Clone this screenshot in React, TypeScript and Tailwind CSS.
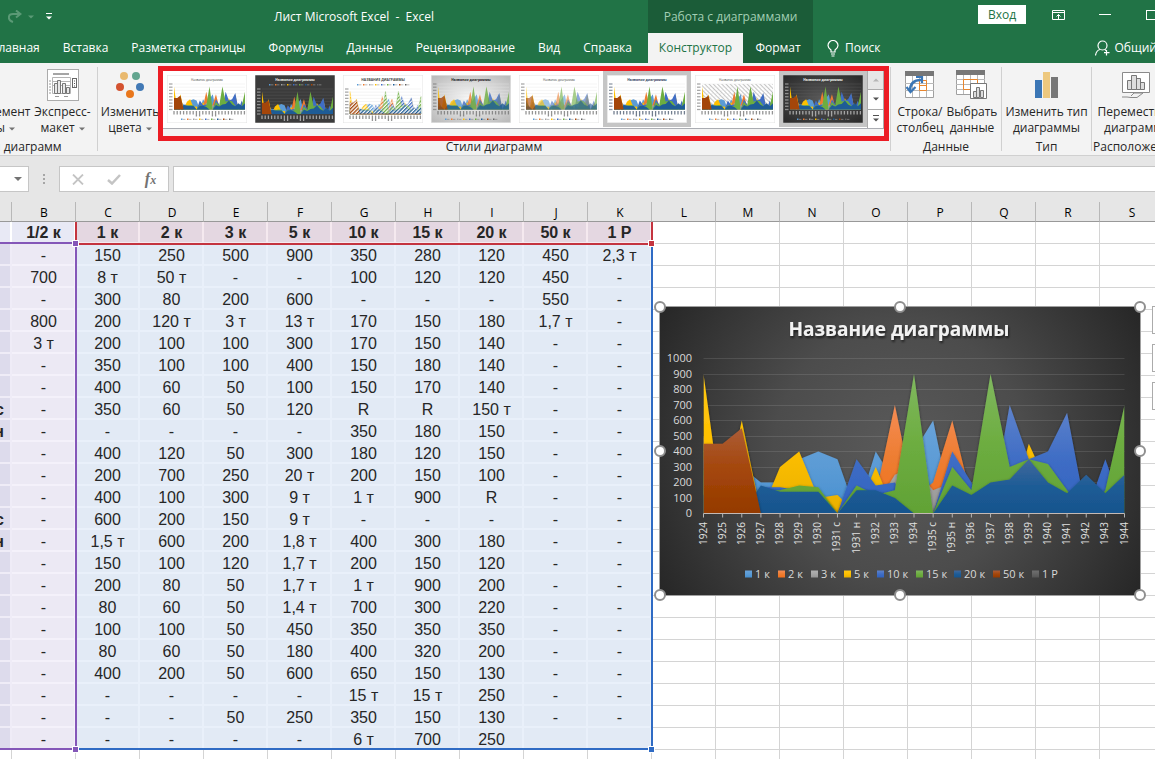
import type { ReactNode } from 'react';

type Variant = 'light' | 'dark' | 'hatched' | 'gradient' | 'soft' | 'navy' | 'lines' | 'night';

const COLUMNS = 'ABCDEFGHIJKLMNOPQRS'.split('');
const HEADERS = ['1/2 к', '1 к', '2 к', '3 к', '5 к', '10 к', '15 к', '20 к', '50 к', '1 Р'];

// One row per year: B..K
const ROWS = [
  ['-', '150', '250', '500', '900', '350', '280', '120', '450', '2,3 т'],
  ['700', '8 т', '50 т', '-', '-', '100', '120', '120', '450', '-'],
  ['-', '300', '80', '200', '600', '-', '-', '-', '550', '-'],
  ['800', '200', '120 т', '3 т', '13 т', '170', '150', '180', '1,7 т', '-'],
  ['3 т', '200', '100', '100', '300', '170', '150', '140', '-', '-'],
  ['-', '350', '100', '100', '400', '150', '180', '140', '-', '-'],
  ['-', '400', '60', '50', '100', '150', '170', '140', '-', '-'],
  ['-', '350', '60', '50', '120', 'R', 'R', '150 т', '-', '-'],
  ['-', '-', '-', '-', '-', '350', '180', '150', '-', '-'],
  ['-', '400', '120', '50', '300', '180', '120', '150', '-', '-'],
  ['-', '200', '700', '250', '20 т', '200', '150', '100', '-', '-'],
  ['-', '400', '100', '300', '9 т', '1 т', '900', 'R', '-', '-'],
  ['-', '600', '200', '150', '9 т', '-', '-', '-', '-', '-'],
  ['-', '1,5 т', '600', '200', '1,8 т', '400', '300', '180', '-', '-'],
  ['-', '150', '100', '120', '1,7 т', '200', '150', '120', '-', '-'],
  ['-', '200', '80', '50', '1,7 т', '1 т', '900', '200', '-', '-'],
  ['-', '80', '60', '50', '1,4 т', '700', '300', '220', '-', '-'],
  ['-', '100', '100', '50', '450', '350', '350', '350', '-', '-'],
  ['-', '80', '60', '50', '180', '400', '320', '200', '-', '-'],
  ['-', '400', '200', '50', '600', '650', '150', '130', '-', '-'],
  ['-', '-', '-', '-', '-', '15 т', '15 т', '250', '-', '-'],
  ['-', '-', '-', '50', '250', '350', '150', '130', '-', '-'],
  ['-', '-', '-', '-', '-', '6 т', '700', '250', '', ''],
];

const YEARS = [
  '1924', '1925', '1926', '1927', '1928', '1929', '1930', '1931 с', '1931 н', '1932', '1933', '1934',
  '1935 с', '1935 н', '1936', '1937', '1938', '1939', '1940', '1941', '1942', '1943', '1944',
];

const SERIES = [
  { name: '1 к', top: '#69a3da', bottom: '#468fd0', flat: '#5b9bd5', x: 85 },
  { name: '2 к', top: '#f58c55', bottom: '#f26f1c', flat: '#ed7d31', x: 118 },
  { name: '3 к', top: '#b0b0b0', bottom: '#959595', flat: '#a5a5a5', x: 151 },
  { name: '5 к', top: '#ffc816', bottom: '#e8b000', flat: '#ffc000', x: 184 },
  { name: '10 к', top: '#5f83cb', bottom: '#2f62c0', flat: '#3f6dc5', x: 217 },
  { name: '15 к', top: '#80b860', bottom: '#61a235', flat: '#6dad40', x: 256 },
  { name: '20 к', top: '#41689c', bottom: '#16548d', flat: '#1e5c96', x: 294 },
  { name: '50 к', top: '#ac5c37', bottom: '#943a00', flat: '#a4460a', x: 333 },
  { name: '1 Р', top: '#707070', bottom: '#555555', flat: '#636363', x: 372 },
];

// Text cells count as zero, as they do in the sheet
const seriesValues = SERIES.map((_, i) => ROWS.map((row) => Number(row[i + 1]) || 0));

function areaPath(values: number[], left: number, right: number, top: number, base: number) {
  const step = (right - left) / (values.length - 1);
  const points = values.map((v, i) => `${left + i * step},${base - (v / 1000) * (base - top)}`);
  return `M${left},${base}L${points.join('L')}L${right},${base}Z`;
}

function AreaChart() {
  const left = 43.5;
  const right = 464.5;
  const top = 51.5;
  const base = 206.5;
  const step = (right - left) / 22;

  return (
    <svg viewBox="0 0 480 288" className="block w-full font-['Open_Sans',sans-serif]" role="img" aria-label="Название диаграммы">
      <defs>
        <radialGradient id="chart-bg" gradientUnits="userSpaceOnUse" cx="240" cy="144" r="280">
          <stop offset="0" stopColor="#5a5a5a" />
          <stop offset="0.45" stopColor="#4c4c4c" />
          <stop offset="1" stopColor="#262626" />
        </radialGradient>
        {SERIES.map((s, i) => (
          <linearGradient key={s.name} id={`series-${i}`} x1="0" y1="0" x2="0" y2="1">
            <stop offset="0" stopColor={s.top} />
            <stop offset="0.5" stopColor={s.flat} />
            <stop offset="1" stopColor={s.bottom} />
          </linearGradient>
        ))}
        <filter id="series-shadow" x="-5%" y="-10%" width="110%" height="120%">
          <feDropShadow dx="0" dy="1" stdDeviation="1.5" floodColor="#000" floodOpacity="0.45" />
        </filter>
        <filter id="title-shadow" x="-5%" y="-20%" width="110%" height="160%">
          <feDropShadow dx="1" dy="2" stdDeviation="1" floodColor="#000" floodOpacity="0.6" />
        </filter>
        <clipPath id="plot-clip">
          <rect x={left} y="40" width={right - left} height={base - 40} />
        </clipPath>
      </defs>
      <rect width="480" height="288" fill="url(#chart-bg)" />
      <text x="239" y="29" textAnchor="middle" fontSize="19" fontWeight="700" fill="#f2f2f2" filter="url(#title-shadow)">
        Название диаграммы
      </text>
      {Array.from({ length: 11 }, (_, i) => {
        const y = base - i * 15.5;
        return (
          <g key={i}>
            {i > 0 && <line x1={left} x2={right} y1={Math.floor(y) + 0.5} y2={Math.floor(y) + 0.5} stroke="#f2f2f2" strokeOpacity="0.12" />}
            <text x="32" y={y + 3.5} textAnchor="end" fontSize="11" fill="#d9d9d9">
              {i * 100}
            </text>
          </g>
        );
      })}
      <g clipPath="url(#plot-clip)">
        {seriesValues.map((values, i) => (
          <path key={i} d={areaPath(values, left, right, top, base)} fill={`url(#series-${i})`} filter={values.some(Boolean) ? 'url(#series-shadow)' : undefined} />
        ))}
      </g>
      <line x1={left} x2={right} y1={base} y2={base} stroke="#c4b9b4" />
      {YEARS.map((year, i) => {
        const x = left + i * step;
        return (
          <g key={year}>
            <line x1={x} x2={x} y1={base} y2={base + 4} stroke="#b4b4b4" />
            <text transform={`translate(${x + 3} 215) rotate(-90)`} textAnchor="end" fontSize="10" fill="#e0e0e0">
              {year}
            </text>
          </g>
        );
      })}
      {SERIES.map((s, i) => (
        <g key={s.name}>
          <rect x={s.x} y="263.5" width="7" height="7" fill={`url(#series-${i})`} />
          <text x={s.x + 10} y="271" fontSize="11" fill="#d9d9d9">
            {s.name}
          </text>
        </g>
      ))}
    </svg>
  );
}

function StyleThumb({ variant, id }: { variant: Variant; id: string }) {
  const dark = variant === 'dark' || variant === 'night';
  const legendOnTop = variant === 'dark' || variant === 'hatched';
  const bold = dark || variant === 'gradient' || variant === 'navy' || variant === 'hatched';
  const top = legendOnTop ? 14 : 9;
  const base = legendOnTop ? 39 : 34.5;
  const ink = dark ? '#c8c8c8' : variant === 'navy' ? '#44546a' : '#707070';
  const bg = variant === 'dark' ? '#3b3b3b' : dark || variant === 'gradient' ? `url(#${id}-bg)` : '#fff';

  return (
    <svg viewBox="0 0 80 48" className="block h-12 w-20 font-['Open_Sans',sans-serif]">
      <defs>
        <radialGradient id={`${id}-bg`} r="65%">
          <stop offset="0" stopColor={dark ? '#5a5a5a' : '#fafafa'} />
          <stop offset="1" stopColor={dark ? '#2c2c2c' : '#bcbcbc'} />
        </radialGradient>
        <pattern id={`${id}-back`} width="3" height="3" patternUnits="userSpaceOnUse" patternTransform="rotate(-45)">
          <rect width="0.6" height="3" fill="#999" />
        </pattern>
        {SERIES.map((s, i) => (
          <pattern key={s.name} id={`${id}-h${i}`} width="2.600" height="2.600" patternUnits="userSpaceOnUse" patternTransform="rotate(45)">
            <rect width="2.600" height="2.600" fill="#fff" />
            <rect width="1.300" height="2.600" fill={s.flat} />
          </pattern>
        ))}
      </defs>
      <rect x="0.250" y="0.250" width="79.500" height="47.500" fill={bg} stroke={dark ? 'none' : '#e2e2e2'} strokeWidth="0.500" />
      <text x="40" y="5.500" textAnchor="middle" fontSize={bold ? 3.4 : 3} fontWeight={bold ? 700 : 400} fill={dark ? '#f2f2f2' : variant === 'gradient' ? '#222' : variant === 'navy' ? '#34455e' : '#444'}>
        {variant === 'hatched' ? 'НАЗВАНИЕ ДИАГРАММЫ' : 'Название диаграммы'}
      </text>
      {variant === 'lines' && <rect x="7" y={top} width="71" height={base - top} fill={`url(#${id}-back)`} />}
      {Array.from({ length: 9 }, (_, i) => {
        const y = base - (i * (base - top)) / 8;
        return (
          <g key={i}>
            <line x1="7" x2="78" y1={y} y2={y} stroke={dark ? '#5c5c5c' : '#e4e4e4'} strokeWidth="0.4" />
            <line x1="2" x2="5.5" y1={y} y2={y} stroke={ink} strokeWidth="1.300" opacity="0.6" />
          </g>
        );
      })}
      {seriesValues.map((values, i) => (
        <path
          key={i}
          d={areaPath(values, 7, 78, top, base)}
          fill={variant === 'hatched' ? `url(#${id}-h${i})` : SERIES[i].flat}
          stroke={variant === 'hatched' && i < 8 ? SERIES[i].flat : 'none'}
          strokeWidth="0.3"
          opacity={variant === 'soft' ? 0.6 : variant === 'gradient' ? 0.8 : 1}
        />
      ))}
      {YEARS.map((year, i) => (
        <line key={year} x1={7 + i * 3.2} x2={7 + i * 3.2} y1={base + 1.5} y2={base + (year.length > 4 ? 7 : 5)} stroke={ink} strokeWidth="1.300" opacity="0.75" />
      ))}
      {SERIES.map((s, i) => (
        <g key={s.name}>
          <rect x={14 + i * 6} y={legendOnTop ? 9 : 43.5} width="1.500" height="1.500" fill={s.flat} />
          <rect x={16 + i * 6} y={legendOnTop ? 9.4 : 43.9} width="2.400" height="0.900" fill={ink} opacity="0.5" />
        </g>
      ))}
    </svg>
  );
}

const STYLES: { label: string; variant: Variant; framed?: boolean }[] = [
  { label: 'Стиль 1', variant: 'light' },
  { label: 'Стиль 2', variant: 'dark' },
  { label: 'Стиль 3', variant: 'hatched' },
  { label: 'Стиль 4', variant: 'gradient' },
  { label: 'Стиль 5', variant: 'soft' },
  { label: 'Стиль 6', variant: 'navy', framed: true },
  { label: 'Стиль 7', variant: 'lines' },
  { label: 'Стиль 8', variant: 'night', framed: true },
];

function Caret({ className = '' }: { className?: string }) {
  return (
    <svg viewBox="0 0 6 4" className={`inline-block h-1 w-1.5 ${className}`} aria-hidden="true">
      <path d="M0 0.5h6L3 3.5z" fill="currentColor" />
    </svg>
  );
}

function RibbonButton({ lines, icon, caret, className }: { lines: [string, string]; icon?: ReactNode; caret?: boolean; className: string }) {
  return (
    <button type="button" className={`flex shrink-0 flex-col items-center whitespace-nowrap pt-1 leading-4 ${className}`}>
      <span className="mb-px flex h-9 items-center justify-center">{icon}</span>
      <span>{lines[0]}</span>
      <span>
        {lines[1]}
        {caret && <Caret className="ml-1 align-middle text-neutral-500" />}
      </span>
    </button>
  );
}

function RibbonGroup({ title, className, children }: { title: string; className: string; children: ReactNode }) {
  return (
    <section className={`flex shrink-0 flex-col ${className}`}>
      <div className="flex h-[76px] justify-center">{children}</div>
      <div className="whitespace-nowrap text-center leading-4">{title}</div>
    </section>
  );
}

function Divider() {
  return <div className="mt-1 h-[84px] w-px shrink-0 bg-[#d0d0d0]" />;
}

function LayoutIcon() {
  return (
    <svg width="32" height="32" viewBox="0 0 32 32" fill="none">
      <rect x="0.5" y="0.5" width="31" height="31" fill="#fff" stroke="#ababab" />
      <path d="M6 5h16" stroke="#a5a5a5" strokeWidth="2" />
      <path d="M5.5 8.500h18v16h-18zM5.500 12.500h18M5.500 16.500h18" stroke="#b5b5b5" />
      <path d="M2 12h2M2 15h2M2 18h2M2 21h2M2 24h2M8 27.500h4M17 27.500h4" stroke="#999" />
      <path d="M7.500 14.500h3v10h-3zM10.500 11.500h3v13h-3zM15.500 14.500h3v10h-3zM19.500 18.500h3v6h-3z" fill="#e8e8e8" stroke="#777" />
      <rect x="25.500" y="9.500" width="4" height="9" fill="#fff" stroke="#666" />
      <path d="M27 12h1M27 14.500h1M27 17h1" stroke="#555" />
    </svg>
  );
}

function ColorsIcon() {
  return (
    <svg width="28" height="28" viewBox="0 0 28 28">
      <circle cx="8" cy="5" r="4" fill="#e9b96e" />
      <circle cx="20" cy="5" r="4" fill="#63a58f" />
      <circle cx="4" cy="16" r="4" fill="#d35230" />
      <circle cx="24" cy="16" r="4" fill="#4179b5" />
      <circle cx="14" cy="23" r="4" fill="#e9771c" />
    </svg>
  );
}

function SwitchIcon() {
  return (
    <svg width="30" height="28" viewBox="0 0 30 28" fill="none">
      <path d="M0.500 1.500h28v25h-28z" fill="#fff" stroke="#a0a0a0" />
      <path d="M0 0h29v5H0z" fill="#777" />
      <path d="M7.500 5v21M14.500 5v21M21.500 5v21M0 12.500h29M0 19.500h29" stroke="#b8b8b8" />
      <path d="M14.500 9.500h7v10h-7zM14.500 14.500h7" stroke="#e8862e" />
      <path d="M5 20C5 12 9 9 16 9" stroke="#3b76b5" strokeWidth="2.500" />
      <path d="M11 6h6v6M1.500 16l4 5 5-5" stroke="#3b76b5" strokeWidth="2.200" />
    </svg>
  );
}

function SelectDataIcon() {
  return (
    <svg width="32" height="30" viewBox="0 0 32 30" fill="none">
      <path d="M0.500 1.500h28v23h-28z" fill="#fff" stroke="#a0a0a0" />
      <path d="M0 0h29v5H0z" fill="#777" />
      <path d="M7.500 5v19M14.500 5v19M21.500 5v19M0 9.500h29M0 14.500h29M0 19.500h29" stroke="#b8b8b8" />
      <path d="M7.500 9.500h14v10h-14z" stroke="#e8862e" />
      <path d="M14.500 13.500h16v15h-16z" fill="#fff" stroke="#777" />
      <path d="M17.500 21.500h3v6h-3zM20.500 17.500h3v10h-3zM24.500 20.500h3v7h-3z" fill="#ddd" stroke="#777" />
    </svg>
  );
}

function ChartTypeIcon() {
  return (
    <svg width="24" height="26" viewBox="0 0 24 26">
      <path d="M0 8h7v18H0z" fill="#3b76b5" />
      <path d="M8 0h7v26H8z" fill="#edc87e" />
      <path d="M16 5h7v21h-7z" fill="#777" />
    </svg>
  );
}

function MoveChartIcon() {
  return (
    <svg width="28" height="26" viewBox="0 0 28 26" fill="none">
      <path d="M0.500 0.500h27v20h-27z" fill="#fff" stroke="#8a8a8a" />
      <path d="M5.500 8.500h4v9h-4zM9.500 3.500h5v14h-5zM14.500 6.500h4v11h-4zM18.500 10.500h4v7h-4z" fill="#ddd" stroke="#777" />
      <path d="M0 25h5l4 0.500h6l6-4.500h-9l-3 3" fill="#f3f3f3" stroke="#8a8a8a" />
    </svg>
  );
}

function Tab({ children }: { children: ReactNode }) {
  return (
    <button type="button" className="shrink-0 whitespace-nowrap">
      {children}
    </button>
  );
}

function TitleAndTabs() {
  return (
    <header className="flex h-[63px] shrink-0 overflow-hidden bg-[#217346] text-white">
      <div className="flex w-[648px] shrink-0 flex-col">
        <div className="flex h-[33px] items-center">
          <button type="button" aria-label="Вернуть" className="ml-2 flex items-center gap-1.5 text-[#5b9a76]">
            <svg width="14" height="13" viewBox="0 0 14 13" fill="none" stroke="currentColor" strokeWidth="2">
              <path d="M5 12C-1 10 0 4 5 4h7M8 0.500L12.500 4 8 7.500" />
            </svg>
            <Caret />
          </button>
          <button type="button" aria-label="Настройка панели быстрого доступа" className="ml-3 flex flex-col items-center gap-0.5">
            <span className="h-px w-1.5 bg-white" />
            <Caret />
          </button>
          <div className="flex-1 pl-2 text-center">Лист Microsoft Excel&nbsp; -&nbsp; Excel</div>
        </div>
        <nav className="flex h-[30px] items-center justify-end gap-[23px] pr-4">
          <Tab>Главная</Tab>
          <Tab>Вставка</Tab>
          <Tab>Разметка страницы</Tab>
          <Tab>Формулы</Tab>
          <Tab>Данные</Tab>
          <Tab>Рецензирование</Tab>
          <Tab>Вид</Tab>
          <Tab>Справка</Tab>
        </nav>
      </div>
      <div className="flex w-[165px] shrink-0 flex-col bg-[#1b5c38]">
        <div className="flex h-[33px] items-center justify-center text-[#a3cfb5]">Работа с диаграммами</div>
        <div className="flex h-[30px]">
          <button type="button" className="w-[95px] bg-[#f3f3f3] text-[#217346]">Конструктор</button>
          <button type="button" className="flex-1">Формат</button>
        </div>
      </div>
      <div className="flex min-w-0 flex-1 flex-col">
        <div className="-mr-2 flex h-[33px] items-center justify-end">
          <button type="button" className="mb-1 h-[19px] w-12 bg-white text-[#217346]">Вход</button>
          <button type="button" aria-label="Параметры ленты" className="mx-[26px] mb-1">
            <svg width="13" height="10" viewBox="0 0 13 10" fill="none" stroke="currentColor">
              <path d="M0.500 0.500h12v9h-12zM0 2.500h13M6.500 9V4.500M4.500 6.500l2-2 2 2" />
            </svg>
          </button>
          <button type="button" aria-label="Свернуть" className="mb-1 ml-2 h-px w-3 bg-white" />
          <button type="button" aria-label="Развернуть" className="mb-1 ml-[35px] h-2.5 w-[17px] border border-white" />
        </div>
        <div className="flex h-[30px] items-center">
          <button type="button" className="ml-3.5 flex items-center gap-1.5">
            <svg width="12" height="17" viewBox="0 0 12 17" fill="none" stroke="currentColor" strokeWidth="1.200">
              <path d="M4 12V10C2 8.500 1 7.500 1 5.500a5 5 0 0 1 10 0C11 7.500 10 8.500 8 10v2zM4 14h4M4.500 16h3" />
            </svg>
            Поиск
          </button>
          <button type="button" className="-mr-11 ml-auto flex items-center gap-1 whitespace-nowrap">
            <svg width="15" height="16" viewBox="0 0 15 16" fill="none" stroke="currentColor" strokeWidth="1.200">
              <circle cx="7.500" cy="5.500" r="4.500" />
              <path d="M0.500 15.500C1 12 2.500 10 5 9.500M10 9.500l1 1M11.500 10v5.500M9 12.700h5.500" />
            </svg>
            Общий доступ
          </button>
        </div>
      </div>
    </header>
  );
}

function Ribbon() {
  return (
    <div className="flex h-[93px] shrink-0 overflow-hidden border-b border-[#d0d0d0] bg-[#f3f3f3] text-[#262626]">
      <RibbonGroup title="Макеты диаграмм" className="-ml-20 w-[177px]">
        <RibbonButton lines={['Добавить элемент', 'диаграммы']} caret className="w-27" />
        <RibbonButton lines={['Экспресс-', 'макет']} caret icon={<LayoutIcon />} className="w-16" />
      </RibbonGroup>
      <Divider />
      <RibbonGroup title="Стили диаграмм" className="w-[792px]">
        <RibbonButton lines={['Изменить', 'цвета']} caret icon={<ColorsIcon />} className="w-15 pl-1" />
        <div className="mr-px mt-[3px] flex h-[75px] flex-1 items-start border-5 border-[#ec1c24]">
          <div className="flex h-[58px] flex-1 border-b border-[#abadb3] bg-white">
            {STYLES.map((style, i) => (
              <button
                key={style.label}
                type="button"
                aria-label={style.label}
                className={`flex h-14 w-22 shrink-0 items-center justify-center ${style.framed ? 'bg-[#c5c5c5]' : ''}`}
              >
                <StyleThumb variant={style.variant} id={`style-${i}`} />
              </button>
            ))}
            <div className="flex flex-1 flex-col border-x border-[#ababab] text-neutral-600">
              <button type="button" aria-label="Вверх" className="flex flex-1 items-center justify-center bg-[#e6e6e6] text-[#b5b5b5]">
                <Caret className="rotate-180" />
              </button>
              <button type="button" aria-label="Вниз" className="flex flex-1 items-center justify-center border-y border-[#ababab]">
                <Caret />
              </button>
              <button type="button" aria-label="Все стили" className="flex flex-1 flex-col items-center justify-center gap-0.5">
                <span className="h-px w-1.5 bg-neutral-600" />
                <Caret />
              </button>
            </div>
          </div>
        </div>
      </RibbonGroup>
      <Divider />
      <RibbonGroup title="Данные" className="w-[110px]">
        <RibbonButton lines={['Строка/', 'столбец']} icon={<SwitchIcon />} className="w-13" />
        <RibbonButton lines={['Выбрать', 'данные']} icon={<SelectDataIcon />} className="w-13" />
      </RibbonGroup>
      <Divider />
      <RibbonGroup title="Тип" className="w-[89px]">
        <RibbonButton lines={['Изменить тип', 'диаграммы']} icon={<ChartTypeIcon />} className="w-20" />
      </RibbonGroup>
      <Divider />
      <RibbonGroup title="Расположение" className="w-[88px]">
        <RibbonButton lines={['Переместить', 'диаграмму']} icon={<MoveChartIcon />} className="w-20" />
      </RibbonGroup>
    </div>
  );
}

function FormulaBar() {
  return (
    <div className="flex h-[46px] shrink-0 items-center bg-[#e6e6e6]">
      <div className="flex h-[26px] w-[29px] shrink-0 items-center justify-end border border-l-0 border-[#c6c6c6] bg-white">
        <input aria-label="Имя" className="w-3 min-w-0 outline-none" />
        <button type="button" aria-label="Список имён" className="flex px-1.5 text-neutral-500">
          <Caret className="h-1.5 w-2" />
        </button>
      </div>
      <div className="mx-3.5 flex flex-col gap-0.5">
        <span className="size-0.5 bg-[#a6a6a6]" />
        <span className="size-0.5 bg-[#a6a6a6]" />
        <span className="size-0.5 bg-[#a6a6a6]" />
      </div>
      <div className="flex h-[26px] w-[110px] shrink-0 items-center justify-around border border-[#c6c6c6] bg-white text-[#c4c4c4]">
        <button type="button" aria-label="Отмена">
          <svg width="12" height="11" viewBox="0 0 12 11" fill="none" stroke="currentColor" strokeWidth="1.800">
            <path d="M1 0.500l10 10M11 0.500l-10 10" />
          </svg>
        </button>
        <button type="button" aria-label="Ввод">
          <svg width="14" height="11" viewBox="0 0 14 11" fill="none" stroke="currentColor" strokeWidth="2.500">
            <path d="M1 6l4 3.500L13 1" />
          </svg>
        </button>
        <button type="button" className="font-['Liberation_Serif',serif] text-base font-bold italic leading-4 text-neutral-500">
          f<span className="text-xs">x</span>
        </button>
      </div>
      <input aria-label="Строка формул" className="ml-1 h-[26px] min-w-0 flex-1 border border-r-0 border-[#c6c6c6] bg-white px-2 outline-none" />
    </div>
  );
}

function cellClass(col: number) {
  if (col === 0) return 'border-r-2 border-b-2 border-[#efecf7] bg-[#dddbec]';
  if (col === 1) return 'border-r-2 border-b-2 border-[#f4f1fa] bg-[#ece9f4]';
  if (col <= 10) return 'border-r-2 border-b-2 border-[#e9f0fa] bg-[#e2eaf5]';
  return 'border-r border-b border-[#d4d4d4] bg-white';
}

function headClass(col: number) {
  if (col <= 1) return 'border-r-2 border-b-2 border-white bg-[#e8e9f5]';
  if (col <= 10) return 'border-r-2 border-b-2 border-[#f5e9ef] bg-[#e4d7e1]';
  return 'border-r border-b border-[#d4d4d4] bg-white';
}

function Handle({ className }: { className: string }) {
  return <span className={`absolute size-[7px] border border-white ${className}`} />;
}

function Knob({ className }: { className: string }) {
  return <span className={`absolute size-3 -translate-x-1/2 -translate-y-1/2 rounded-full border-2 border-[#8f8f8f] bg-white ${className}`} />;
}

function Sheet() {
  return (
    <main className="relative min-h-0 flex-1 overflow-hidden bg-white">
      <table className="w-[1164px] table-fixed border-separate border-spacing-0 text-center font-['Liberation_Sans',Arial,sans-serif] text-base text-[#262626]">
        <colgroup>
          {COLUMNS.map((c, i) => (
            <col key={c} className={i === 0 ? 'w-3' : 'w-16'} />
          ))}
        </colgroup>
        <thead>
          <tr className="h-5 bg-[#e6e6e6] font-['Open_Sans',sans-serif] text-xs text-black">
            {COLUMNS.map((c, i) => (
              <th key={c} scope="col" className="h-5 border-r border-b border-r-[#b8b8b8] border-b-[#999] p-0 pt-0.5 pl-px font-normal leading-4">
                {i > 0 && c}
              </th>
            ))}
          </tr>
        </thead>
        <tbody>
          <tr className="h-[22px]">
            {COLUMNS.map((c, i) => (
              <td key={c} className={`h-[22px] p-0 pt-0.5 pl-px font-bold leading-[18px] ${headClass(i)}`}>
                {HEADERS[i - 1]}
              </td>
            ))}
          </tr>
          {ROWS.map((row, r) => (
            <tr key={YEARS[r]} className="h-[22px]">
              {COLUMNS.map((c, i) => (
                <td key={c} className={`h-[22px] p-0 pt-1 pl-px leading-4 ${cellClass(i)}`}>
                  {i === 0 ? (
                    <span className="flex justify-end pr-1.5 font-bold">{YEARS[r].split(' ')[1]}</span>
                  ) : (
                    row[i - 1]
                  )}
                </td>
              ))}
            </tr>
          ))}
          <tr className="h-[22px]">
            {COLUMNS.map((c) => (
              <td key={c} className="h-[22px] border-r border-b border-[#d4d4d4] p-0" />
            ))}
          </tr>
        </tbody>
      </table>

      {/* coloured outlines of the chart's source ranges */}
      <div className="absolute left-0 top-5 h-[22px] w-[76px] border-b-2 border-[#8457b8]" />
      <div className="absolute left-0 top-[42px] h-[506px] w-[77px] border-r-2 border-b-2 border-[#8457b8]" />
      <div className="absolute left-[77px] top-[42px] h-[506px] w-[576px] border-r-2 border-b-2 border-[#2f6bc4]" />
      <div className="absolute left-[75px] top-5 h-[23px] w-[578px] border-x-2 border-b-2 border-[#c4343f]" />
      <Handle className="left-[72px] top-[38px] bg-[#8457b8]" />
      <Handle className="left-[648px] top-[38px] bg-[#c4343f]" />
      <Handle className="left-[72px] top-[544px] bg-[#8457b8]" />
      <Handle className="left-[648px] top-[544px] bg-[#2f6bc4]" />

      <figure className="absolute left-[660px] top-[105px] w-[480px] outline outline-[#a0a0a0]">
        <AreaChart />
        <Knob className="left-0 top-0" />
        <Knob className="left-1/2 top-0" />
        <Knob className="left-full top-0" />
        <Knob className="left-0 top-1/2" />
        <Knob className="left-full top-1/2" />
        <Knob className="left-0 top-full" />
        <Knob className="left-1/2 top-full" />
        <Knob className="left-full top-full" />
      </figure>
      <div className="absolute left-[1152px] top-[104px] flex flex-col gap-2.5">
        <button type="button" aria-label="Элементы диаграммы" className="size-7 border border-[#ababab] bg-white" />
        <button type="button" aria-label="Стили диаграмм" className="size-7 border border-[#ababab] bg-white" />
        <button type="button" aria-label="Фильтры диаграммы" className="size-7 border border-[#ababab] bg-white" />
      </div>
    </main>
  );
}

export default function App() {
  return (
    <div className="flex h-screen flex-col overflow-hidden bg-white font-['Open_Sans','Noto_Sans',sans-serif] text-xs">
      <TitleAndTabs />
      <Ribbon />
      <FormulaBar />
      <Sheet />
    </div>
  );
}
